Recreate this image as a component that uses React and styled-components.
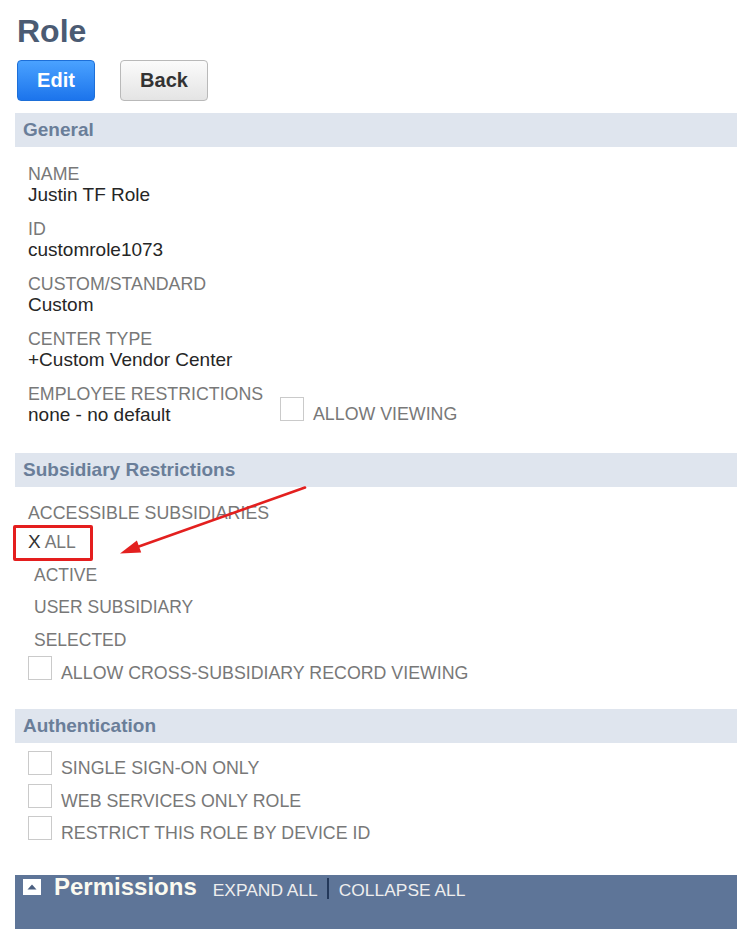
import React from "react";
import styled, { createGlobalStyle } from "styled-components";

const Global = createGlobalStyle`
  html, body { margin: 0; padding: 0; background: #ffffff; }
  body { font-family: "Liberation Sans", Arial, sans-serif; }
`;

const Page = styled.div`
  position: relative;
  width: 756px;
  min-height: 949px;
  padding: 0 19px 0 15px;
  box-sizing: border-box;
`;

const Title = styled.h1`
  margin: 11px 0 0 2px;
  font-size: 32px;
  line-height: 40px;
  font-weight: 700;
  color: #4b5b73;
`;

const ButtonRow = styled.div`
  display: flex;
  gap: 25px;
  margin: 9px 0 12px 2px;
`;

const Button = styled.button`
  height: 41px;
  width: ${(p) => p.$w}px;
  padding: 0;
  border-radius: 4px;
  font-family: "Liberation Sans", Arial, sans-serif;
  font-size: 20px;
  font-weight: 700;
  cursor: pointer;
  border: 1px solid ${(p) => (p.$primary ? "#1d6fd8" : "#b9b9b9")};
  color: ${(p) => (p.$primary ? "#ffffff" : "#333333")};
  background: ${(p) =>
    p.$primary
      ? "linear-gradient(#4aa2ff, #1c74ec)"
      : "linear-gradient(#fbfbfb, #e4e4e4)"};
`;

const SectionHeader = styled.div`
  height: 34px;
  background: #dfe5ee;
  padding-left: 8px;
  display: flex;
  align-items: center;
  font-size: 19px;
  font-weight: 700;
  color: #6a7e99;
`;

const Body = styled.div`
  padding: ${(p) => p.$pt}px 0 ${(p) => p.$pb}px 13px;
`;

const Field = styled.div`
  margin-bottom: 14px;
`;

const Label = styled.div`
  font-size: 17.8px;
  line-height: 19px;
  color: #787878;
  text-transform: uppercase;
  white-space: nowrap;
`;

const Value = styled.div`
  font-size: 19px;
  line-height: 22px;
  color: #262626;
  white-space: nowrap;
`;

const InlineRow = styled.div`
  display: flex;
  align-items: flex-end;
  gap: 16px;
`;

const FieldCol = styled.div`
  width: 236px;
`;

const CheckRow = styled.div`
  display: flex;
  align-items: flex-end;
  gap: 9px;
  margin-bottom: ${(p) => p.$mb || 0}px;
`;

const Box = styled.span`
  display: block;
  width: 22px;
  height: 22px;
  border: 1px solid #cacaca;
  background: #fff;
  flex: none;
`;

const CheckLabel = styled.span`
  font-size: 17.8px;
  line-height: 19px;
  color: #787878;
  margin-bottom: -3px;
  white-space: nowrap;
`;

const Options = styled.div`
  margin-top: 3px;
`;

const Option = styled.div`
  position: relative;
  height: 32.5px;
  line-height: 32px;
  font-size: 17.5px;
  color: #787878;
  padding-left: ${(p) => (p.$indent ? 6 : 0)}px;
  white-space: nowrap;
`;

const Highlight = styled.span`
  position: absolute;
  left: -15px;
  top: -1px;
  width: 74px;
  height: 30px;
  border: 3px solid #e41e1e;
  border-radius: 2px;
  pointer-events: none;
`;

const XMark = styled.span`
  font-size: 19px;
  color: #333333;
  margin-right: 4px;
`;

const PermBar = styled.div`
  height: 54px;
  background: #5e7598;
  display: flex;
  align-items: flex-start;
  padding-left: 8px;
  box-sizing: border-box;
`;

const PermIcon = styled.svg`
  flex: none;
  margin: 4px 13px 0 0;
`;

const PermTitle = styled.span`
  font-size: 24px;
  line-height: 24px;
  font-weight: 700;
  color: #fbfaf0;
  margin-right: 16px;
`;

const PermLink = styled.span`
  font-size: 17.4px;
  line-height: 24px;
  color: #eeeeee;
  padding-top: 3px;
`;

const Sep = styled.span`
  width: 2px;
  height: 21px;
  background: #23385a;
  margin: 3px 10px 0 9px;
`;

const Arrow = styled.svg`
  position: absolute;
  left: 0;
  top: 0;
  pointer-events: none;
`;

export default function App() {
  return (
    <>
      <Global />
      <Page>
        <Title>Role</Title>
        <ButtonRow>
          <Button $primary $w={78}>Edit</Button>
          <Button $w={88}>Back</Button>
        </ButtonRow>

        <SectionHeader>General</SectionHeader>
        <Body $pt={18} $pb={27}>
          <Field>
            <Label>Name</Label>
            <Value>Justin TF Role</Value>
          </Field>
          <Field>
            <Label>ID</Label>
            <Value>customrole1073</Value>
          </Field>
          <Field>
            <Label>Custom/Standard</Label>
            <Value>Custom</Value>
          </Field>
          <Field>
            <Label>Center Type</Label>
            <Value>+Custom Vendor Center</Value>
          </Field>
          <InlineRow>
            <FieldCol>
              <Label>Employee Restrictions</Label>
              <Value>none - no default</Value>
            </FieldCol>
            <CheckRow $mb={5}>
              <Box />
              <CheckLabel>ALLOW VIEWING</CheckLabel>
            </CheckRow>
          </InlineRow>
        </Body>

        <SectionHeader>Subsidiary Restrictions</SectionHeader>
        <Body $pt={17} $pb={29}>
          <Label>Accessible Subsidiaries</Label>
          <Options>
            <Option>
              <XMark>X</XMark>ALL
              <Highlight />
            </Option>
            <Option $indent>ACTIVE</Option>
            <Option $indent>USER SUBSIDIARY</Option>
            <Option $indent>SELECTED</Option>
          </Options>
          <CheckRow>
            <Box />
            <CheckLabel>ALLOW CROSS-SUBSIDIARY RECORD VIEWING</CheckLabel>
          </CheckRow>
        </Body>

        <SectionHeader>Authentication</SectionHeader>
        <Body $pt={8} $pb={35}>
          <CheckRow $mb={8.5}>
            <Box />
            <CheckLabel>SINGLE SIGN-ON ONLY</CheckLabel>
          </CheckRow>
          <CheckRow $mb={8.5}>
            <Box />
            <CheckLabel>WEB SERVICES ONLY ROLE</CheckLabel>
          </CheckRow>
          <CheckRow>
            <Box />
            <CheckLabel>RESTRICT THIS ROLE BY DEVICE ID</CheckLabel>
          </CheckRow>
        </Body>

        <PermBar>
          <PermIcon width="18" height="16" viewBox="0 0 18 16">
            <rect x="0" y="0" width="18" height="16" fill="#ffffff" />
            <path d="M4.5 10.5 L9 5.5 L13.5 10.5 Z" fill="#4a5f80" />
          </PermIcon>
          <PermTitle>Permissions</PermTitle>
          <PermLink>EXPAND ALL</PermLink>
          <Sep />
          <PermLink>COLLAPSE ALL</PermLink>
        </PermBar>

        <Arrow width="756" height="949" viewBox="0 0 756 949">
          <line x1="305" y1="476.5" x2="136" y2="536.5" stroke="#e3201f" strokeWidth="2.6" strokeLinecap="round" />
          <path d="M120 542.5 L141.2 541.6 L136.9 529.6 Z" fill="#e3201f" />
        </Arrow>
      </Page>
    </>
  );
}
